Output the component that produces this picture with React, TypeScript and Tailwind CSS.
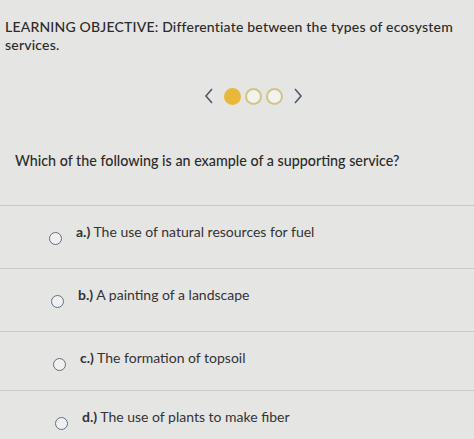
import React from 'react';

const options = [
  { key: 'a.)', text: 'The use of natural resources for fuel', pad: 'pl-[49px]', h: 'h-[63px]' },
  { key: 'b.)', text: 'A painting of a landscape', pad: 'pl-[51px]', h: 'h-[63px]' },
  { key: 'c.)', text: 'The formation of topsoil', pad: 'pl-[53px]', h: 'h-[59px]' },
  { key: 'd.)', text: 'The use of plants to make fiber', pad: 'pl-[55px]', h: 'h-[60px]' },
];

const Radio = () => (
  <span className="mt-[9px] block h-[13px] w-[13px] shrink-0 rounded-full border-[1.5px] border-[#5f6f82] bg-[#f0f0ef]" />
);

const App = () => {
  return (
    <div
      className="h-[439px] w-[474px] overflow-hidden bg-[#e5e5e3] text-[#2b2b2b]"
      style={{ fontFamily: 'Lato, "Open Sans", sans-serif' }}
    >
      <div className="px-[5px] pt-[18px]">
        <p className="text-[14px] leading-[18px] font-medium tracking-[0.2px]">
          LEARNING OBJECTIVE: Differentiate between the types of ecosystem services.
        </p>
      </div>

      <div className="mt-[32px] flex items-center justify-center gap-[4px] pl-[32px]">
        <svg width="12" height="20" viewBox="0 0 12 20" className="mr-[5px]">
          <path d="M9 3 L3 10 L9 17" fill="none" stroke="#4b5b6e" strokeWidth="1.6" />
        </svg>
        <span className="block h-[17px] w-[17px] rounded-full bg-[#e8b83a]" />
        <span className="block h-[17px] w-[17px] rounded-full border-2 border-[#d2c488] bg-[#f2f2ef]" />
        <span className="block h-[17px] w-[17px] rounded-full border-2 border-[#d2c488] bg-[#f2f2ef]" />
        <svg width="12" height="20" viewBox="0 0 12 20" className="ml-[5px]">
          <path d="M3 3 L9 10 L3 17" fill="none" stroke="#4b5b6e" strokeWidth="1.6" />
        </svg>
      </div>

      <p className="mt-[45px] px-[15px] text-[14.3px] leading-[20px] font-medium">
        Which of the following is an example of a supporting service?
      </p>

      <div className="mt-[34px]">
        {options.map((o) => (
          <div
            key={o.key}
            className={`flex items-start gap-[14px] border-t border-[#c9c9c6] pt-[17px] ${o.pad} ${o.h}`}
          >
            <Radio />
            <p className="text-[14px] leading-[18px] text-[#333]">
              <span className="font-bold">{o.key}</span> {o.text}
            </p>
          </div>
        ))}
      </div>
    </div>
  );
};

export default App;
